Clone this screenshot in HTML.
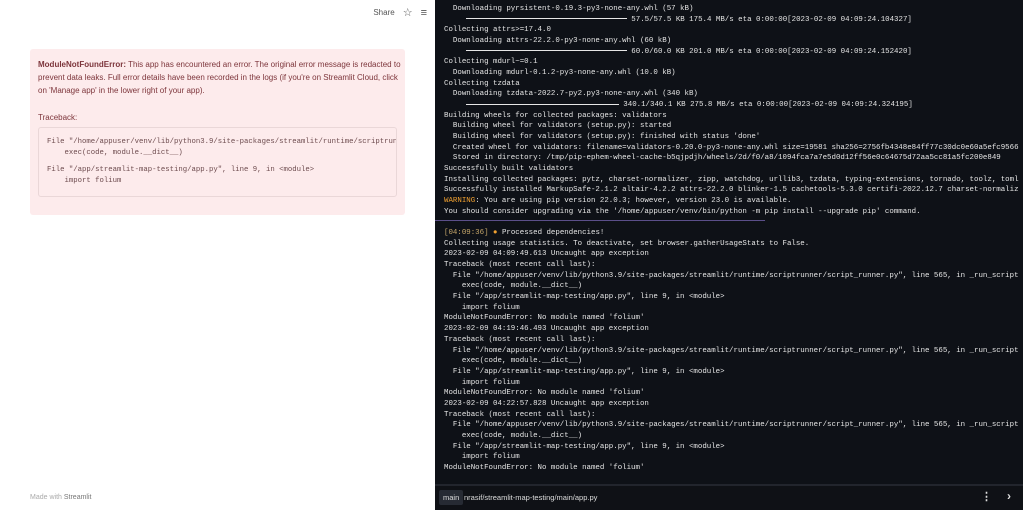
<!DOCTYPE html>
<html><head><meta charset="utf-8"><style>
*{margin:0;padding:0;box-sizing:border-box}
body{width:1023px;height:510px;overflow:hidden;background:#fff;font-family:"Liberation Sans",sans-serif;position:relative}
.left{position:absolute;left:0;top:0;width:435px;height:510px;background:#fff}
.hdr{position:absolute;top:6px;right:8px;font-size:8px;color:#555;display:flex;align-items:center;gap:8px}
.err{position:absolute;left:30px;top:49px;width:375px;height:166px;background:#fdebec;border-radius:3px;color:#7d353b;font-size:8px;line-height:13.2px;padding:9px 3px 9px 8px}
.code{position:absolute;left:8px;top:78px;width:359px;height:70px;border:1px solid #ead7d8;border-radius:3px;font-family:"Liberation Mono",monospace;font-size:7.3px;line-height:11.3px;padding:9px 8px;white-space:pre;overflow:hidden;color:#6d4b4e}
.made{position:absolute;left:30px;top:494px;font-size:7px;color:#aaa}
.term{position:absolute;left:435px;top:0;width:588px;height:484px;background:#0e1117;color:#e6e6e6;font-family:"Liberation Mono",monospace;font-size:7.43px;line-height:10.67px;padding:4px 0 0 9px;white-space:pre;overflow:hidden}
.bar{display:inline-block;height:1px;background:#e6e6e6;vertical-align:middle;margin-right:4px}
.sep{position:absolute;left:435px;top:220px;width:330px;height:1px;background:#5b4f8a}
.foot{position:absolute;left:435px;top:484px;width:588px;height:26px;background:#0f1116;border-top:2px solid #22252d;color:#ddd;font-size:7.5px}
.w{color:#f0a030}.b{color:#c8a86a}
</style></head><body>
<div class="left">
<div class="hdr"><span>Share</span><span style="font-size:11px">☆</span><span style="font-size:11px">≡</span></div>
<div class="err"><b>ModuleNotFoundError:</b> This app has encountered an error. The original error message is redacted to prevent data leaks. Full error details have been recorded in the logs (if you're on Streamlit Cloud, click on 'Manage app' in the lower right of your app).<div style="margin-top:13px">Traceback:</div>
<div class="code">File "/home/appuser/venv/lib/python3.9/site-packages/streamlit/runtime/scriptrunner/script_runner.py"
    exec(code, module.__dict__)
<div style="margin-top:5px">File "/app/streamlit-map-testing/app.py", line 9, in &lt;module&gt;
    import folium</div></div></div>
<div class="made">Made with <span style="color:#777">Streamlit</span></div>
</div>
<div class="term">  Downloading pyrsistent-0.19.3-py3-none-any.whl (57 kB)
     <span class="bar" style="width:161px"></span>57.5/57.5 KB 175.4 MB/s eta 0:00:00[2023-02-09 04:09:24.104327]
Collecting attrs&gt;=17.4.0
  Downloading attrs-22.2.0-py3-none-any.whl (60 kB)
     <span class="bar" style="width:161px"></span>60.0/60.0 KB 201.0 MB/s eta 0:00:00[2023-02-09 04:09:24.152420]
Collecting mdurl~=0.1
  Downloading mdurl-0.1.2-py3-none-any.whl (10.0 kB)
Collecting tzdata
  Downloading tzdata-2022.7-py2.py3-none-any.whl (340 kB)
     <span class="bar" style="width:153px"></span>340.1/340.1 KB 275.8 MB/s eta 0:00:00[2023-02-09 04:09:24.324195]
Building wheels for collected packages: validators
  Building wheel for validators (setup.py): started
  Building wheel for validators (setup.py): finished with status 'done'
  Created wheel for validators: filename=validators-0.20.0-py3-none-any.whl size=19581 sha256=2756fb4348e84ff77c30dc0e60a5efc9566
  Stored in directory: /tmp/pip-ephem-wheel-cache-b5qjpdjh/wheels/2d/f0/a8/1094fca7a7e5d0d12ff56e0c64675d72aa5cc81a5fc200e849
Successfully built validators
Installing collected packages: pytz, charset-normalizer, zipp, watchdog, urllib3, tzdata, typing-extensions, tornado, toolz, toml
Successfully installed MarkupSafe-2.1.2 altair-4.2.2 attrs-22.2.0 blinker-1.5 cachetools-5.3.0 certifi-2022.12.7 charset-normaliz
<span class="w">WARNING</span>: You are using pip version 22.0.3; however, version 23.0 is available.
You should consider upgrading via the '/home/appuser/venv/bin/python -m pip install --upgrade pip' command.

<span class="b">[04:09:36]</span> <span class="w">●</span> Processed dependencies!
Collecting usage statistics. To deactivate, set browser.gatherUsageStats to False.
2023-02-09 04:09:49.613 Uncaught app exception
Traceback (most recent call last):
  File "/home/appuser/venv/lib/python3.9/site-packages/streamlit/runtime/scriptrunner/script_runner.py", line 565, in _run_script
    exec(code, module.__dict__)
  File "/app/streamlit-map-testing/app.py", line 9, in &lt;module&gt;
    import folium
ModuleNotFoundError: No module named 'folium'
2023-02-09 04:19:46.493 Uncaught app exception
Traceback (most recent call last):
  File "/home/appuser/venv/lib/python3.9/site-packages/streamlit/runtime/scriptrunner/script_runner.py", line 565, in _run_script
    exec(code, module.__dict__)
  File "/app/streamlit-map-testing/app.py", line 9, in &lt;module&gt;
    import folium
ModuleNotFoundError: No module named 'folium'
2023-02-09 04:22:57.828 Uncaught app exception
Traceback (most recent call last):
  File "/home/appuser/venv/lib/python3.9/site-packages/streamlit/runtime/scriptrunner/script_runner.py", line 565, in _run_script
    exec(code, module.__dict__)
  File "/app/streamlit-map-testing/app.py", line 9, in &lt;module&gt;
    import folium
ModuleNotFoundError: No module named 'folium'</div>
<div class="sep"></div>
<div class="foot">
<span style="position:absolute;left:4px;top:4px;background:#262a33;padding:3px 4px;border-radius:2px">main</span>
<span style="position:absolute;left:29px;top:7px">nrasif/streamlit-map-testing/main/app.py</span>
<span style="position:absolute;left:546px;top:4px;font-size:11px;font-weight:bold">⋮</span>
<span style="position:absolute;left:572px;top:3px;font-size:12px;font-weight:bold">›</span>
</div>
</body></html>
